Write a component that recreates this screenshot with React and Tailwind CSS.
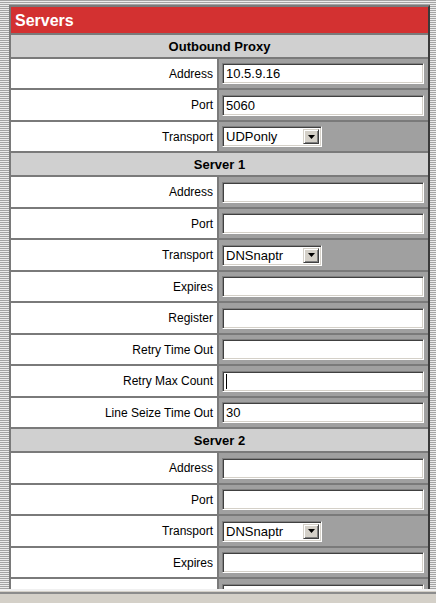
import React from "react";

const F = { fontFamily: '"Liberation Sans", Arial, sans-serif' };

function TextBox({ value = "", caret = false }) {
  return (
    <div className="w-[202px] h-[21px] bg-white border border-t-[#808080] border-l-[#808080] border-b-white border-r-white shadow-[inset_1px_1px_0_#404040,inset_-1px_-1px_0_#d4d0c8] flex items-center pl-[3px] text-[13px] text-black leading-none">
      {caret && <span className="inline-block w-px h-[15px] bg-black"></span>}
      {value}
    </div>
  );
}

function Select({ value }) {
  return (
    <div className="w-[100px] h-[21px] bg-white border border-t-[#808080] border-l-[#808080] border-b-white border-r-white shadow-[inset_1px_1px_0_#404040,inset_-1px_-1px_0_#d4d0c8] flex items-center text-[13px] text-black leading-none p-[2px]">
      <span className="flex-1 pl-[1px]">{value}</span>
      <span className="w-[16px] h-[15px] bg-[#d4d0c8] border border-t-[#d4d0c8] border-l-[#d4d0c8] border-b-[#404040] border-r-[#404040] shadow-[inset_1px_1px_0_#ffffff,inset_-1px_-1px_0_#808080] flex items-center justify-center">
        <svg width="7" height="4" viewBox="0 0 7 4">
          <path d="M0 0H7L3.5 4Z" fill="#000" />
        </svg>
      </span>
    </div>
  );
}

function Header({ title }) {
  return (
    <div className="h-[22px] pt-[2px] bg-[#d0d0d0] flex items-center justify-center text-[13px] font-bold text-black">
      {title}
    </div>
  );
}

function Row({ label, tall, children }) {
  return (
    <div className={tall ? "h-[30px] flex gap-[2px]" : "h-[29px] flex gap-[2px]"}>
      <div className="w-[206px] bg-white flex items-center justify-end pr-[4px] text-[12px] text-black">
        {label}
      </div>
      <div className="flex-1 bg-[#a0a0a0] flex items-center pl-[3px]">{children}</div>
    </div>
  );
}

export default function App() {
  return (
    <div className="w-[436px] h-[603px] flex flex-col overflow-hidden" style={F}>
      <div className="h-[589px] overflow-hidden bg-[repeating-linear-gradient(to_bottom,#a4a4a4_0px,#a4a4a4_1px,#ececec_1px,#ececec_2px)] pt-[5px] pl-[9px]">
        <div className="w-[421px] border-l-2 border-t-2 border-r-2 border-l-[#7a7a7a] border-t-[#7a7a7a] border-r-[#3a3a3a] bg-[#7a7a7a] flex flex-col gap-[2px]">
          <div className="h-[26px] bg-[#d33131] flex items-center pl-[4px] pt-[1px] text-white text-[16px] font-bold">
            Servers
          </div>
          <Header title="Outbound Proxy" />
          <Row label="Address"><TextBox value="10.5.9.16" /></Row>
          <Row label="Port" tall><TextBox value="5060" /></Row>
          <Row label="Transport"><Select value="UDPonly" /></Row>
          <Header title="Server 1" />
          <Row label="Address" tall><TextBox /></Row>
          <Row label="Port"><TextBox /></Row>
          <Row label="Transport" tall><Select value="DNSnaptr" /></Row>
          <Row label="Expires"><TextBox /></Row>
          <Row label="Register" tall><TextBox /></Row>
          <Row label="Retry Time Out"><TextBox /></Row>
          <Row label="Retry Max Count" tall><TextBox caret /></Row>
          <Row label="Line Seize Time Out"><TextBox value="30" /></Row>
          <Header title="Server 2" />
          <Row label="Address" tall><TextBox /></Row>
          <Row label="Port"><TextBox /></Row>
          <Row label="Transport" tall><Select value="DNSnaptr" /></Row>
          <Row label="Expires"><TextBox /></Row>
          <Row label="" tall><TextBox /></Row>
        </div>
      </div>
      <div className="h-[2px] bg-[#f0f0f0]"></div>
      <div className="h-[1px] bg-[#d4d0c8]"></div>
      <div className="h-[2px] bg-[#8c8c8c]"></div>
      <div className="flex-1 bg-[#d4d0c8]"></div>
    </div>
  );
}
